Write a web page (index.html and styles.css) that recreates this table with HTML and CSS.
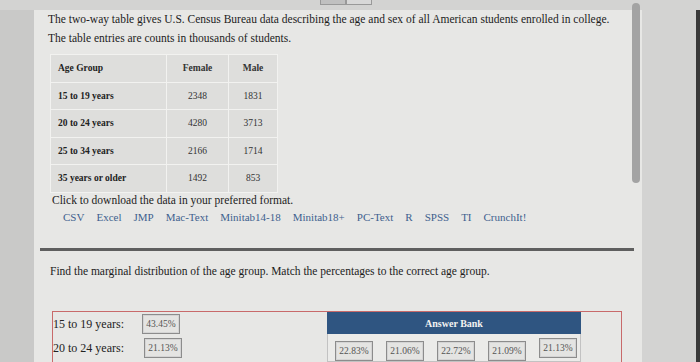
FILE: index.html
```html
<!DOCTYPE html>
<html>
<head>
<meta charset="utf-8">
<link rel="stylesheet" href="styles.css">
</head>
<body>
<div class="screen">
  <div class="topbar"><div class="tabs"><span class="tab"></span><span class="tab"></span></div></div>
  <div class="main">
    <div class="gutter-left"></div>
    <div class="panel">
      <section class="upper">
        <p class="intro">The two-way table gives U.S. Census Bureau data describing the age and sex of all American students enrolled in college.<br>The table entries are counts in thousands of students.</p>
        <table class="data">
          <tr><th class="c1">Age Group</th><th>Female</th><th>Male</th></tr>
          <tr><td class="c1">15 to 19 years</td><td>2348</td><td>1831</td></tr>
          <tr><td class="c1">20 to 24 years</td><td>4280</td><td>3713</td></tr>
          <tr><td class="c1">25 to 34 years</td><td>2166</td><td>1714</td></tr>
          <tr><td class="c1">35 years or older</td><td>1492</td><td>853</td></tr>
        </table>
        <p class="download">Click to download the data in your preferred format.</p>
        <nav class="links">
          <a>CSV</a><a>Excel</a><a>JMP</a><a>Mac-Text</a><a>Minitab14-18</a><a>Minitab18+</a><a>PC-Text</a><a>R</a><a>SPSS</a><a>TI</a><a>CrunchIt!</a>
        </nav>
      </section>
      <div class="sep"></div>
      <section class="lower">
        <p class="question">Find the marginal distribution of the age group. Match the percentages to the correct age group.</p>
        <div class="match">
          <div class="targets">
            <div class="trow"><span class="tlabel">15 to 19 years:</span><span class="chip">43.45%</span></div>
            <div class="trow"><span class="tlabel">20 to 24 years:</span><span class="chip">21.13%</span></div>
          </div>
          <div class="bank">
            <div class="bank-head">Answer Bank</div>
            <div class="bank-body">
              <span class="chip">22.83%</span><span class="chip">21.06%</span><span class="chip">22.72%</span><span class="chip">21.09%</span><span class="chip up">21.13%</span>
            </div>
          </div>
        </div>
      </section>
    </div>
    <div class="gutter-right"><div class="edge"></div></div>
  </div>
  <div class="scrollbar"></div>
</div>
</body>
</html>
```
FILE: styles.css
```css
html, body {
  margin: 0;
  padding: 0;
  width: 700px;
  height: 362px;
  overflow: hidden;
  background: #cbcbca;
  font-family: "Liberation Serif", "Times New Roman", serif;
  color: #1c1c1c;
}
.screen {
  position: relative;
  width: 700px;
  height: 362px;
}
.topbar {
  height: 10px;
  background: #d3d3d2;
  display: flex;
  justify-content: flex-start;
  padding-left: 320px;
}
.tabs {
  display: flex;
  height: 5px;
}
.tab {
  width: 24px;
  height: 4px;
  border: 1px solid #999;
  border-top: none;
  background: #c0c0c0;
}
.tab + .tab {
  background: #d8d8d8;
}
.main {
  display: flex;
  height: 352px;
}
.gutter-left {
  width: 34px;
  background: #c9c9c8;
}
.panel {
  width: 608px;
  background: #e7e7e5;
  display: flex;
  flex-direction: column;
}
.gutter-right {
  flex: 1;
  background: #d3d3d2;
  display: flex;
  justify-content: flex-end;
}
.edge {
  width: 4px;
  background: #3a3a3a;
}
.upper {
  padding: 0 0 0 14px;
  height: 238px;
}
.intro {
  margin: 0;
  font-size: 11.5px;
  line-height: 19px;
}
.data {
  margin: 6px 0 0 2px;
  border-collapse: collapse;
  background: #dededc;
  font-size: 9.5px;
}
.data th, .data td {
  border: 1px solid #f2f2f0;
  height: 26.5px;
  padding: 0;
  text-align: center;
  font-weight: normal;
  color: #333;
  width: 61px;
}
.data th:last-child, .data td:last-child {
  width: 48px;
}
.data th {
  font-weight: bold;
}
.data .c1 {
  width: 108px;
  padding-left: 7px;
  text-align: left;
  font-weight: bold;
  color: #222;
}
.download {
  margin: 1px 0 0 4px;
  font-size: 11.5px;
}
.links {
  display: flex;
  gap: 12px;
  margin: 5px 0 0 15px;
  font-size: 11px;
}
.links a {
  color: #3e5f8e;
}
.sep {
  height: 3px;
  margin: 0 8px 0 6px;
  background: #5f5f5f;
}
.lower {
  padding: 14px 0 0 16px;
  flex: 1;
}
.question {
  margin: 0;
  font-size: 11.5px;
}
.match {
  margin: 34px 0 0 2px;
  width: 568px;
  border: 1px solid #c86a6a;
  border-bottom: none;
  display: flex;
  justify-content: space-between;
  height: 50px;
}
.targets {
  display: flex;
  flex-direction: column;
  gap: 4px;
  padding-top: 2px;
}
.trow {
  display: flex;
  align-items: center;
  height: 20px;
}
.tlabel {
  width: 89px;
  font-size: 12px;
  color: #222;
}
.chip {
  display: inline-flex;
  align-items: center;
  justify-content: center;
  width: 36px;
  height: 18px;
  border: 1px solid #8c8c8c;
  box-shadow: inset 0 0 0 1px #d4d4d4;
  background: #e4e4e2;
  font-size: 9.5px;
  color: #555;
}
.trow + .trow .chip {
  margin-left: 2px;
}
.bank {
  width: 254px;
  margin-right: 40px;
  display: flex;
  flex-direction: column;
}
.bank-head {
  height: 25px;
  background: #2f5581;
  color: #f2f2f2;
  font-size: 10px;
  font-weight: bold;
  display: flex;
  align-items: center;
  justify-content: center;
}
.bank-body {
  flex: 1;
  border: 1px solid #c2c2c2;
  border-top: none;
  background: #ebebe9;
  display: flex;
  gap: 13px;
  padding: 7px 0 0 7px;
}
.bank-body .chip.up {
  margin-top: -3px;
}
.scrollbar {
  position: absolute;
  left: 632px;
  top: 3px;
  width: 8px;
  height: 180px;
  border-radius: 4px;
  background: #a3a3a3;
}
```
